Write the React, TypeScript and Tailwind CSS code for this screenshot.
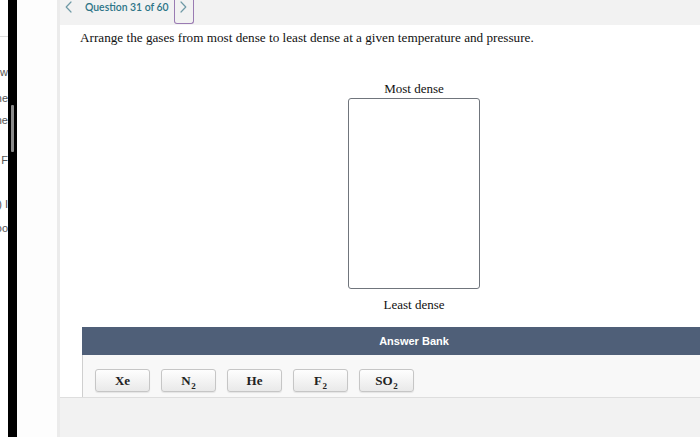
import React from "react";

const serif = "font-['Liberation_Serif','Times_New_Roman',serif]";

// 左端に見切れている前ページの文字
const leftFragments: { text: string; top: number }[] = [
  { text: "w", top: 64 },
  { text: "the", top: 90 },
  { text: "he", top: 112 },
  { text: ", F", top: 152 },
  { text: "o) I", top: 196 },
  { text: "boo", top: 220 },
];

type Gas = { base: string; sub?: string };

const gases: Gas[] = [
  { base: "Xe" },
  { base: "N", sub: "2" },
  { base: "He" },
  { base: "F", sub: "2" },
  { base: "SO", sub: "2" },
];

function Chevron({ dir }: { dir: "left" | "right" }) {
  return (
    <svg width="7" height="12" viewBox="0 0 7 12" fill="none">
      <path
        d={dir === "left" ? "M6 1 L1.2 6 L6 11" : "M1 1 L5.8 6 L1 11"}
        stroke="#6f9aa6"
        strokeWidth="1.2"
        strokeLinecap="round"
        strokeLinejoin="round"
      />
    </svg>
  );
}

function GasChip({ gas }: { gas: Gas }) {
  return (
    <div
      className={`w-[55px] h-[23px] flex items-center justify-center rounded-[3px] border border-[#c6c6c6] bg-gradient-to-b from-[#fefefe] to-[#e9e9e9] shadow-[0_1px_1px_rgba(0,0,0,0.08)] text-[13px] font-bold text-[#222] ${serif}`}
    >
      <span className="leading-none">
        {gas.base}
        {gas.sub && (
          <span className="inline-block text-[9px] relative top-[4px] ml-[0.5px]">
            {gas.sub}
          </span>
        )}
      </span>
    </div>
  );
}

export default function App() {
  return (
    <div className="flex w-[700px] h-[437px] overflow-hidden bg-white">
      {/* 見切れた左パネル */}
      <div className="relative w-[8px] shrink-0 overflow-hidden bg-white">
        <div className="h-[37px] border-b border-[#dcdcdc] w-full" />
        {leftFragments.map((f) => (
          <div
            key={f.top}
            className="absolute right-0 flex justify-end whitespace-nowrap text-[11px] text-[#555] font-['Liberation_Sans',sans-serif]"
            style={{ top: f.top }}
          >
            {f.text}
          </div>
        ))}
      </div>

      {/* スクロールバー */}
      <div className="w-[9px] shrink-0 bg-black pt-[105px] flex justify-center">
        <div className="w-[3px] h-[47px] bg-[#8a8a8a] rounded-[1px]" />
      </div>

      <div className="w-[40px] shrink-0 bg-[#fdfdfd]" />
      <div className="w-[3px] shrink-0 bg-[#ebebeb]" />

      {/* メイン */}
      <div className="flex-1 flex flex-col bg-[#f2f2f2] min-w-0">
        <div className="h-[25px] flex items-start font-['Lato','Open_Sans',sans-serif]">
          <div className="w-[25px] h-[14px] flex items-center justify-start pl-[5px]">
            <Chevron dir="left" />
          </div>
          <span className="text-[10.4px] leading-[14px] font-semibold text-[#2c7487]">
            Question 31 of 60
          </span>
          <div className="ml-[5px] w-[20px] h-[24px] border border-t-0 border-[#9a7bb3] rounded-b-[3px] flex items-start justify-center pt-[1px]">
            <Chevron dir="right" />
          </div>
        </div>

        <div className="h-[372px] bg-white flex flex-col">
          <div
            className={`pl-[20px] pt-[4px] text-[13.2px] leading-[18px] text-[#111] whitespace-nowrap ${serif}`}
          >
            Arrange the gases from most dense to least dense at a given
            temperature and pressure.
          </div>

          <div className="ml-[22px] w-[664px] flex flex-col items-center mt-[33px]">
            <div className={`text-[13px] leading-[18px] text-[#111] ${serif}`}>
              Most dense
            </div>
            <div className="w-[132px] h-[191px] border-[1.5px] border-[#70757c] rounded-[3px] bg-white" />
            <div
              className={`mt-[7px] text-[13px] leading-[18px] text-[#111] ${serif}`}
            >
              Least dense
            </div>
          </div>

          <div className="ml-[22px] w-[664px] mt-[13px] flex flex-col">
            <div className="h-[28px] bg-[#4f5f78] flex items-center justify-center text-[11px] font-bold text-white font-['Liberation_Sans',Arial,sans-serif]">
              Answer Bank
            </div>
            <div className="h-[42px] bg-[#f8f8f8] border-l border-[#cfcfcf] flex items-start gap-[11px] pl-[12px] pt-[14px]">
              {gases.map((g) => (
                <GasChip key={g.base} gas={g} />
              ))}
            </div>
          </div>
        </div>

        <div className="flex-1 border-t border-[#dedede] bg-[#f2f2f2]" />
      </div>
    </div>
  );
}
